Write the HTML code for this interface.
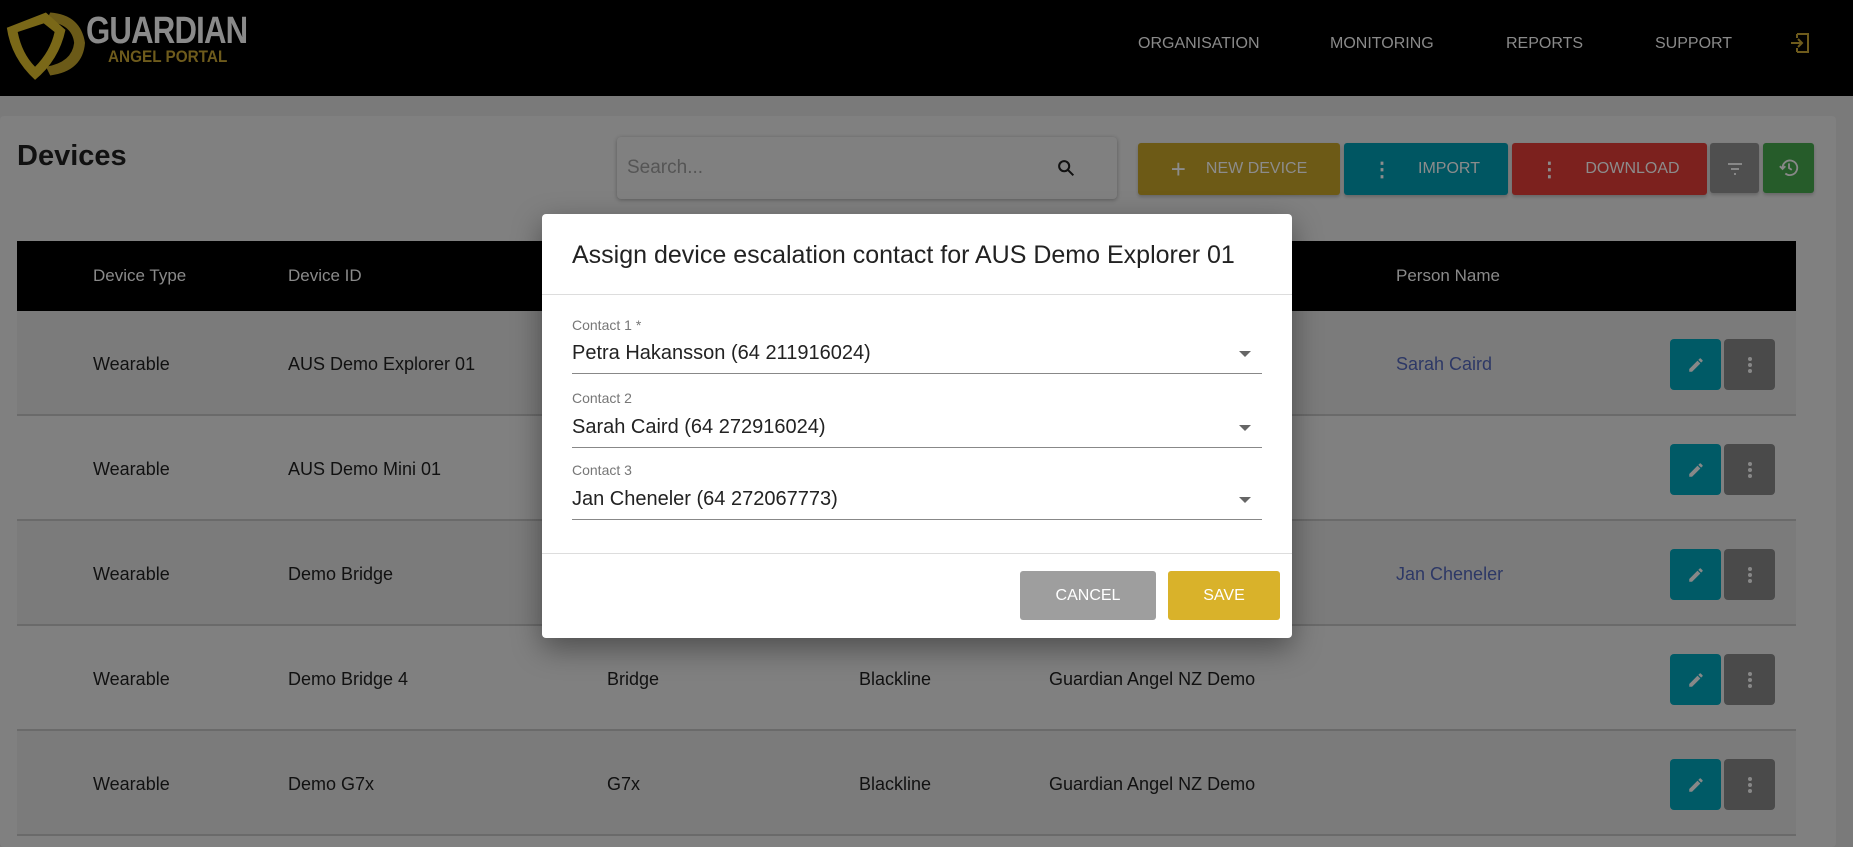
<!DOCTYPE html>
<html><head><meta charset="utf-8"><style>
*{box-sizing:border-box;margin:0;padding:0}
body{width:1853px;height:847px;overflow:hidden;background:#7a7a7a;font-family:"Liberation Sans",sans-serif;position:relative}
.abs{position:absolute}
.hdr{left:0;top:0;width:1853px;height:96px;background:#000}
.nav{color:#8a8a8a;font-size:16px;top:35px}
.panel{left:0;top:116px;width:1836px;height:731px;background:#808080;border-radius:4px}
.btn{top:143px;height:52px;border-radius:3px;color:#8c8c8c;font-size:16px;display:flex;align-items:center;justify-content:center;box-shadow:0 2px 3px rgba(0,0,0,.2)}
.th{top:241px;left:17px;width:1779px;height:70px;background:#000}
.thc{color:#8a8a8a;font-size:17px;top:266px}
.row{left:17px;width:1779px;height:105px;border-bottom:2px solid #6a6a6a}
.td{color:#111;font-size:18px}
.eb{width:51px;height:51px;border-radius:4px;display:flex;align-items:center;justify-content:center}
.dlg{left:542px;top:214px;width:750px;height:424px;background:#fff;border-radius:4px;box-shadow:0 10px 30px rgba(0,0,0,.4)}
.lbl{color:#777;font-size:14px;left:30px}
.val{color:#222;font-size:20px;left:30px}
.ul{left:30px;width:690px;height:1px;background:#888}
.car{left:697px;width:0;height:0;border-left:6px solid transparent;border-right:6px solid transparent;border-top:6px solid #666}
</style></head><body>
<div class="abs hdr"></div>
<svg class="abs" style="left:2px;top:6px" width="90" height="76" viewBox="0 0 82 70">
<path d="M44 6 Q72 8 76 34 Q74 60 44 64 L40 56 Q64 52 66 34 Q64 16 40 14Z" fill="#6b5a18"/>
<path d="M4 20 L40 6 L58 22 Q52 50 30 68 Q8 48 4 20Z M14 24 Q18 44 30 56 Q44 42 48 24 L38 16Z" fill="#7a6818" fill-rule="evenodd"/>
</svg>
<div class="abs" style="left:86px;top:10px;color:#8a8a8a;font-size:38px;font-weight:bold;letter-spacing:-1px;transform:scaleX(.82);transform-origin:left">GUARDIAN</div>
<div class="abs" style="left:108px;top:47px;color:#6e5b1c;font-size:17px;font-weight:bold;transform:scaleX(.9);transform-origin:left">ANGEL PORTAL</div>
<div class="abs nav" style="left:1138px">ORGANISATION</div>
<div class="abs nav" style="left:1330px">MONITORING</div>
<div class="abs nav" style="left:1506px">REPORTS</div>
<div class="abs nav" style="left:1655px">SUPPORT</div>
<svg class="abs" style="left:1788px;top:31px" width="24" height="24" viewBox="0 0 24 24" fill="none" stroke="#6e5b1c" stroke-width="2"><path d="M9 3H20V21H9M9 7V3M9 21V17M3 12H14M10 8L14 12L10 16"/></svg>

<div class="abs panel"></div>
<div class="abs" style="left:17px;top:140px;font-size:29px;font-weight:bold;color:#111">Devices</div>
<div class="abs" style="left:617px;top:137px;width:500px;height:62px;background:#808080;border-radius:4px;box-shadow:0 1px 4px rgba(0,0,0,.3)"></div>
<div class="abs" style="left:627px;top:157px;font-size:19px;color:#555">Search...</div>
<svg class="abs" style="left:1055px;top:157px" width="22" height="22" viewBox="0 0 24 24" fill="none" stroke="#111" stroke-width="2.2"><circle cx="10" cy="10" r="5.5"/><path d="M14 14L20 20"/></svg>

<div class="abs btn" style="left:1138px;width:202px;background:#6d5a16"><span style="font-size:26px;margin-right:20px;font-weight:300">+</span>NEW DEVICE</div>
<div class="abs btn" style="left:1344px;width:164px;background:#005662"><span style="font-size:20px;margin-right:26px;font-weight:bold">⋮</span>IMPORT</div>
<div class="abs btn" style="left:1512px;width:195px;background:#7c211e"><span style="font-size:20px;margin-right:26px;font-weight:bold">⋮</span>DOWNLOAD</div>
<div class="abs btn" style="left:1710px;width:49px;height:50px;background:#4f4f4f"><svg width="20" height="20" viewBox="0 0 20 20" stroke="#888" stroke-width="2"><path d="M3 6H17M6 11H14M9 16H11"/></svg></div>
<div class="abs btn" style="left:1763px;width:51px;height:50px;background:#265c2a"><svg width="22" height="22" viewBox="0 0 24 24" fill="none" stroke="#888" stroke-width="2"><path d="M5 12A8 8 0 1 1 8 18M2 10L5 13L8 10M12 7V12L15 14"/></svg></div>

<div class="abs th"></div>
<div class="abs thc" style="left:93px">Device Type</div>
<div class="abs thc" style="left:288px">Device ID</div>
<div class="abs thc" style="left:1396px">Person Name</div>

<div class="abs row" style="top:311px;background:#7b7b7b"></div>
<div class="abs row" style="top:416px"></div>
<div class="abs row" style="top:521px;background:#7b7b7b"></div>
<div class="abs row" style="top:626px"></div>
<div class="abs row" style="top:731px;background:#7b7b7b"></div>

<div class="abs td" style="left:93px;top:354px">Wearable</div><div class="abs td" style="left:288px;top:354px">AUS Demo Explorer 01</div><div class="abs td" style="left:1396px;top:354px;color:#2d3866">Sarah Caird</div>
<div class="abs td" style="left:93px;top:459px">Wearable</div><div class="abs td" style="left:288px;top:459px">AUS Demo Mini 01</div>
<div class="abs td" style="left:93px;top:564px">Wearable</div><div class="abs td" style="left:288px;top:564px">Demo Bridge</div><div class="abs td" style="left:1396px;top:564px;color:#2d3866">Jan Cheneler</div>
<div class="abs td" style="left:93px;top:669px">Wearable</div><div class="abs td" style="left:288px;top:669px">Demo Bridge 4</div><div class="abs td" style="left:607px;top:669px">Bridge</div><div class="abs td" style="left:859px;top:669px">Blackline</div><div class="abs td" style="left:1049px;top:669px">Guardian Angel NZ Demo</div>
<div class="abs td" style="left:93px;top:774px">Wearable</div><div class="abs td" style="left:288px;top:774px">Demo G7x</div><div class="abs td" style="left:607px;top:774px">G7x</div><div class="abs td" style="left:859px;top:774px">Blackline</div><div class="abs td" style="left:1049px;top:774px">Guardian Angel NZ Demo</div>

<div id="acts"></div>
<script>
var h='';[339,444,549,654,759].forEach(function(t){
h+='<div class="abs eb" style="left:1670px;top:'+t+'px;background:#005a66"><svg width="18" height="18" viewBox="0 0 24 24"><path d="M3 17.25V21h3.75L17.8 9.94l-3.75-3.75L3 17.25zM20.7 7.04a1 1 0 0 0 0-1.41l-2.34-2.34a1 1 0 0 0-1.41 0l-1.83 1.830 3.75 3.75 1.83-1.83z" fill="#888"/></svg></div>';
h+='<div class="abs eb" style="left:1724px;top:'+t+'px;background:#4a4a4a"><svg width="6" height="18" viewBox="0 0 6 18" fill="#888"><circle cx="3" cy="3" r="2"/><circle cx="3" cy="9" r="2"/><circle cx="3" cy="15" r="2"/></svg></div>';});
document.getElementById('acts').innerHTML=h;
</script>

<div class="abs dlg">
<div class="abs" style="left:30px;top:27px;font-size:25px;color:#222">Assign device escalation contact for AUS Demo Explorer 01</div>
<div class="abs" style="left:0;top:80px;width:750px;height:1px;background:#ddd"></div>
<div class="abs lbl" style="top:103px">Contact 1 *</div>
<div class="abs val" style="top:128px">Petra Hakansson (64 211916024)</div>
<div class="abs car" style="top:137px"></div>
<div class="abs ul" style="top:159px"></div>
<div class="abs lbl" style="top:176px">Contact 2</div>
<div class="abs val" style="top:202px">Sarah Caird (64 272916024)</div>
<div class="abs car" style="top:211px"></div>
<div class="abs ul" style="top:233px"></div>
<div class="abs lbl" style="top:248px">Contact 3</div>
<div class="abs val" style="top:274px">Jan Cheneler (64 272067773)</div>
<div class="abs car" style="top:283px"></div>
<div class="abs ul" style="top:305px"></div>
<div class="abs" style="left:0;top:339px;width:750px;height:1px;background:#ddd"></div>
<div class="abs" style="left:478px;top:357px;width:136px;height:49px;background:#9e9e9e;border-radius:3px;color:#fff;font-size:16px;display:flex;align-items:center;justify-content:center">CANCEL</div>
<div class="abs" style="left:626px;top:357px;width:112px;height:49px;background:#d9b22a;border-radius:3px;color:#fff;font-size:16px;display:flex;align-items:center;justify-content:center">SAVE</div>
</div>
</body></html>
